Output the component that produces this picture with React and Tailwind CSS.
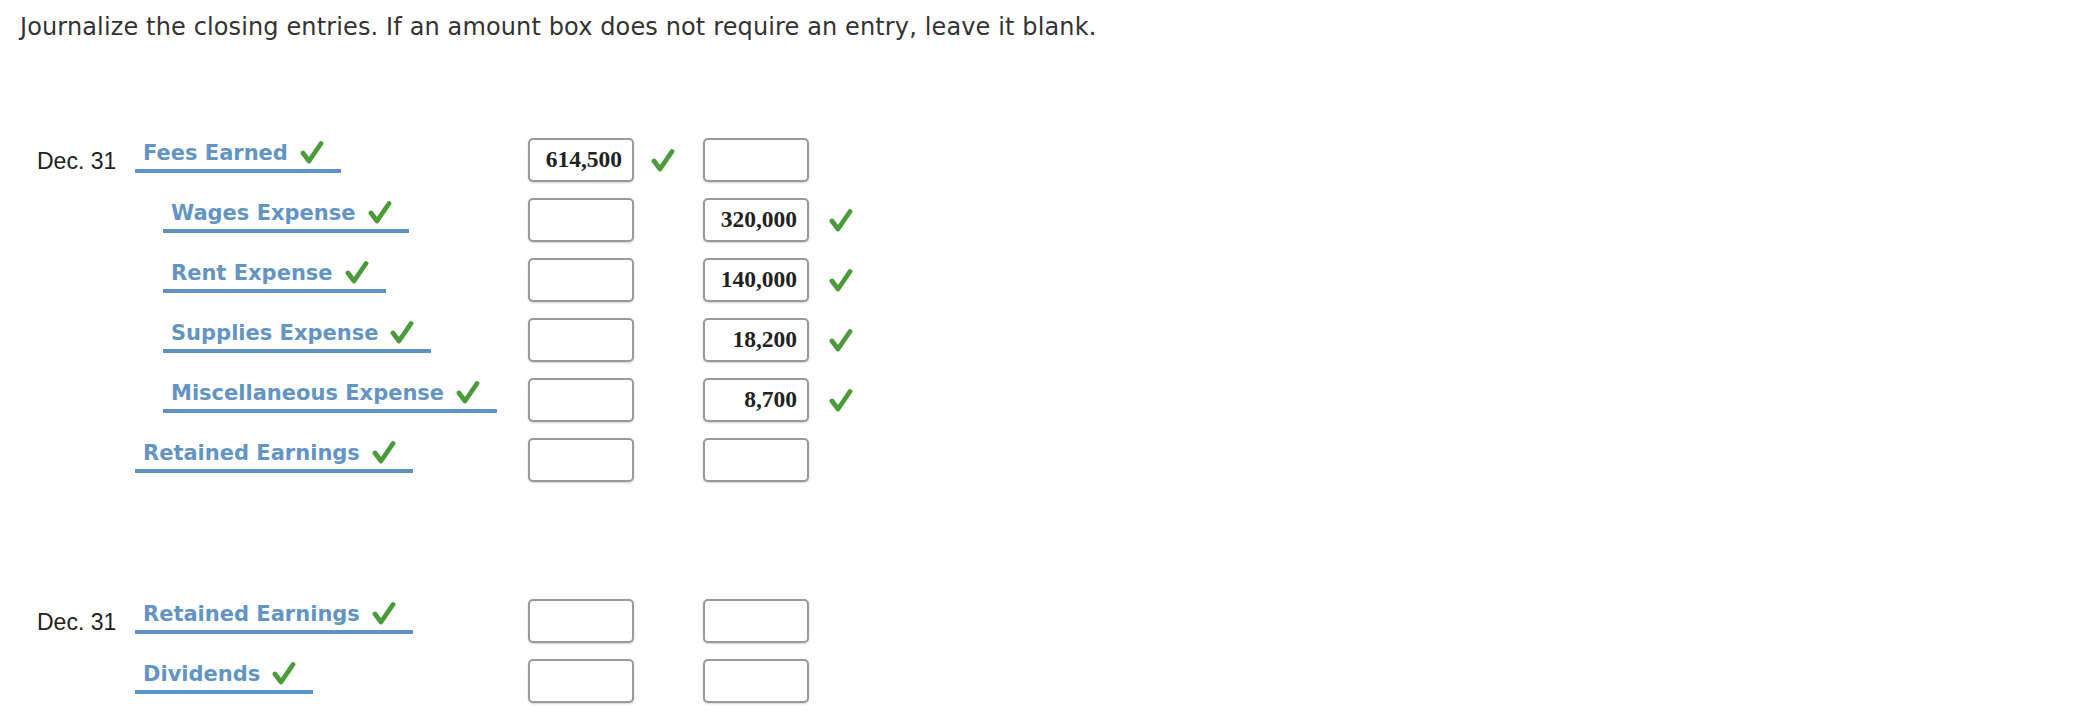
import React from "react";

const entries = [
  {
    rows: [
      { account: "Fees Earned", indent: false, debit: "614,500", credit: "", debitOk: true },
      { account: "Wages Expense", indent: true, debit: "", credit: "320,000", creditOk: true },
      { account: "Rent Expense", indent: true, debit: "", credit: "140,000", creditOk: true },
      { account: "Supplies Expense", indent: true, debit: "", credit: "18,200", creditOk: true },
      { account: "Miscellaneous Expense", indent: true, debit: "", credit: "8,700", creditOk: true },
      { account: "Retained Earnings", indent: false, debit: "", credit: "" },
    ],
  },
  {
    rows: [
      { account: "Retained Earnings", indent: false, debit: "", credit: "" },
      { account: "Dividends", indent: false, debit: "", credit: "" },
    ],
  },
];

function Check() {
  return (
    <svg width="24" height="26" viewBox="0 0 24 26" className="shrink-0">
      <path
        d="M3 14 L9 22 L21 4.5"
        fill="none"
        stroke="#4b9b3b"
        strokeWidth="4.8"
        strokeLinecap="round"
        strokeLinejoin="round"
      />
    </svg>
  );
}

function AmountBox({ value }) {
  return (
    <div className="w-[106px] h-[44px] border-2 border-[#9a9a9a] rounded-[5px] bg-white shadow-[0_1px_2px_rgba(0,0,0,0.18)] flex items-center justify-end pr-[10px] font-['Liberation_Serif',serif] font-bold text-[23.5px] text-[#222]">
      {value}
    </div>
  );
}

function Row({ row, date }) {
  return (
    <div className="flex h-[44px] mb-[16px]">
      <div className="w-[135px] pl-[37px] pt-[3px] flex items-center font-['Liberation_Sans',Arial,sans-serif] text-[23px] text-[#222]">
        {date ? "Dec. 31" : ""}
      </div>
      <div className={`w-[393px] pt-[1px] ${row.indent ? "pl-[28px]" : ""}`}>
        <div className="inline-flex items-end gap-[12px] pl-[8px] pr-[17px] pb-[4px] border-b-4 border-[#5e92c4] leading-[24px]">
          <span className="font-['DejaVu_Sans',sans-serif] font-bold text-[21px] text-[#6394c4]">
            {row.account}
          </span>
          <Check />
        </div>
      </div>
      <AmountBox value={row.debit} />
      <div className="w-[69px] pl-[17px] flex items-center">{row.debitOk && <Check />}</div>
      <AmountBox value={row.credit} />
      <div className="pl-[20px] flex items-center">{row.creditOk && <Check />}</div>
    </div>
  );
}

export default function App() {
  return (
    <div className="w-[2100px] h-[720px] bg-white overflow-hidden">
      <p className="pt-[13px] pl-[20px] font-['DejaVu_Sans',Verdana,sans-serif] text-[24px] leading-[28px] tracking-[0.13px] text-[#333]">
        Journalize the closing entries. If an amount box does not require an entry, leave it blank.
      </p>
      <div className="pt-[97px]">
        {entries.map((entry, i) => (
          <div key={i} className={i > 0 ? "mt-[117px]" : ""}>
            {entry.rows.map((row, j) => (
              <Row key={j} row={row} date={j === 0} />
            ))}
          </div>
        ))}
      </div>
    </div>
  );
}
